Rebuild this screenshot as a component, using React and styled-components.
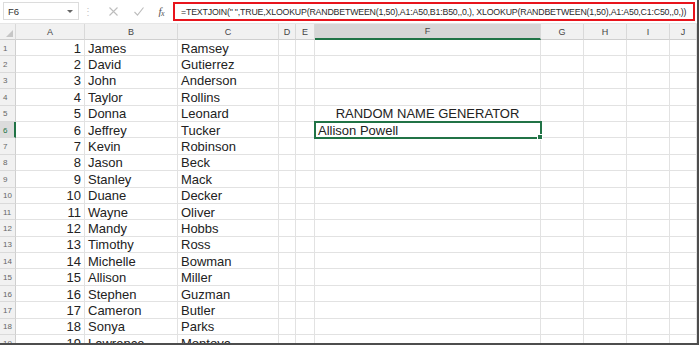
import React from "react";
import styled, { createGlobalStyle } from "styled-components";

const GlobalStyle = createGlobalStyle`
  html, body { margin: 0; padding: 0; background: #ffffff; }
  body { font-family: "Liberation Sans", Arial, sans-serif; }
`;

const COLS = [16, 69, 93, 101, 17, 19, 226, 43, 43, 43, 27];
const LETTERS = ["A", "B", "C", "D", "E", "F", "G", "H", "I", "J"];

const DATA = [
  ["James", "Ramsey"],
  ["David", "Gutierrez"],
  ["John", "Anderson"],
  ["Taylor", "Rollins"],
  ["Donna", "Leonard"],
  ["Jeffrey", "Tucker"],
  ["Kevin", "Robinson"],
  ["Jason", "Beck"],
  ["Stanley", "Mack"],
  ["Duane", "Decker"],
  ["Wayne", "Oliver"],
  ["Mandy", "Hobbs"],
  ["Timothy", "Ross"],
  ["Michelle", "Bowman"],
  ["Allison", "Miller"],
  ["Stephen", "Guzman"],
  ["Cameron", "Butler"],
  ["Sonya", "Parks"],
  ["Lawrence", "Montoya"],
];

const FORMULA =
  '=TEXTJOIN(" ",TRUE,XLOOKUP(RANDBETWEEN(1,50),A1:A50,B1:B50,,0,), XLOOKUP(RANDBETWEEN(1,50),A1:A50,C1:C50,,0,))';

const Frame = styled.div`
  width: 697px;
  height: 343px;
  border-right: 2px solid #4d4d4d;
  border-bottom: 2px solid #4d4d4d;
  overflow: hidden;
  display: flex;
  flex-direction: column;
  background: #ffffff;
`;

const FormulaBar = styled.div`
  flex-shrink: 0;
  height: 24px;
  box-sizing: border-box;
  display: flex;
  align-items: flex-start;
  padding: 2px 2px 0 3px;
  background: #ffffff;
  border-bottom: 1px solid #e6e6e6;
`;

const NameBox = styled.div`
  width: 76px;
  height: 18px;
  box-sizing: border-box;
  border: 1px solid #dcdcdc;
  display: flex;
  align-items: center;
  justify-content: space-between;
  padding: 0 5px 0 4px;
  font-size: 9.5px;
  color: #333;
`;

const Caret = styled.span`
  width: 0;
  height: 0;
  border-left: 3px solid transparent;
  border-right: 3px solid transparent;
  border-top: 3px solid #666;
`;

const Grip = styled.div`
  width: 18px;
  height: 18px;
  display: flex;
  align-items: center;
  justify-content: center;
  color: #c4c4c4;
  font-size: 10px;
`;

const Buttons = styled.div`
  width: 76px;
  height: 18px;
  display: flex;
  align-items: center;
  justify-content: space-around;
  padding: 0 2px 0 4px;
  box-sizing: border-box;
`;

const FxLabel = styled.span`
  font-family: "Liberation Serif", "Times New Roman", serif;
  font-style: italic;
  font-size: 11px;
  color: #555;
  letter-spacing: -0.5px;
  & > sub {
    font-size: 8px;
    vertical-align: -1px;
  }
`;

const FormulaBox = styled.div`
  flex: 1;
  height: 19px;
  box-sizing: border-box;
  border: 2px solid #e8141c;
  display: flex;
  align-items: center;
  padding-left: 6px;
  font-size: 8.8px;
  letter-spacing: -0.19px;
  color: #2b2b2b;
  white-space: nowrap;
  overflow: hidden;
`;

const Sheet = styled.div`
  display: grid;
  grid-template-columns: ${COLS.map((c) => c + "px").join(" ")};
  grid-template-rows: 16px;
  grid-auto-rows: 16.4px;
`;

const HeaderCell = styled.div`
  box-sizing: border-box;
  background: ${(p) => (p.$selected ? "#d6d6d6" : "#f1f1f1")};
  border-right: 1px solid #d9d9d9;
  border-bottom: ${(p) => (p.$selected ? "2px solid #217346" : "1px solid #cfcfcf")};
  display: flex;
  align-items: center;
  justify-content: center;
  font-size: 9px;
  color: #454545;
`;

const Corner = styled.div`
  box-sizing: border-box;
  background: #f1f1f1;
  border-right: 1px solid #d9d9d9;
  border-bottom: 1px solid #cfcfcf;
  display: flex;
  align-items: flex-end;
  justify-content: flex-end;
  padding: 0 2px 2px 0;
`;

const Triangle = styled.span`
  width: 0;
  height: 0;
  border-left: 7px solid transparent;
  border-bottom: 7px solid #c6c6c6;
`;

const RowHead = styled.div`
  box-sizing: border-box;
  background: ${(p) => (p.$selected ? "#dcdcdc" : "#f1f1f1")};
  border-right: ${(p) => (p.$selected ? "2px solid #217346" : "1px solid #cfcfcf")};
  border-bottom: 1px solid #dadada;
  display: flex;
  align-items: center;
  padding: 1px 0 0 3px;
  font-size: 8px;
  color: ${(p) => (p.$selected ? "#217346" : "#666")};
`;

const Cell = styled.div`
  position: relative;
  box-sizing: border-box;
  border-right: 1px solid #e2e2e2;
  border-bottom: 1px solid #e2e2e2;
  display: flex;
  align-items: center;
  justify-content: ${(p) =>
    p.$align === "right" ? "flex-end" : p.$align === "center" ? "center" : "flex-start"};
  padding: 1px 3px 0 3px;
  font-size: 13px;
  color: #222;
  white-space: nowrap;
  overflow: visible;
  ${(p) =>
    p.$selected &&
    `
    outline: 2px solid #217346;
    outline-offset: -1px;
    z-index: 1;
  `}
`;

const Handle = styled.span`
  position: absolute;
  right: -3px;
  bottom: -3px;
  width: 4px;
  height: 4px;
  background: #217346;
  border: 1px solid #fff;
`;

function Cross() {
  return (
    <svg width="11" height="11" viewBox="0 0 11 11">
      <path d="M1.5 1.5 L9.5 9.5 M9.5 1.5 L1.5 9.5" stroke="#bdbdbd" strokeWidth="1.1" fill="none" />
    </svg>
  );
}

function Check() {
  return (
    <svg width="12" height="11" viewBox="0 0 12 11">
      <path d="M1.5 6 L4.5 9.2 L10.5 1.5" stroke="#bdbdbd" strokeWidth="1.1" fill="none" />
    </svg>
  );
}

function renderRow(r) {
  const idx = r + 1;
  const [first, last] = DATA[r];
  const sel = idx === 6;
  const cells = [];
  cells.push(
    <RowHead key="h" $selected={sel}>
      {idx}
    </RowHead>
  );
  cells.push(
    <Cell key="a" $align="right">
      {idx}
    </Cell>
  );
  cells.push(<Cell key="b">{first}</Cell>);
  cells.push(<Cell key="c">{last}</Cell>);
  cells.push(<Cell key="d" />);
  cells.push(<Cell key="e" />);
  if (idx === 5) {
    cells.push(
      <Cell key="f" $align="center">
        RANDOM NAME GENERATOR
      </Cell>
    );
  } else if (idx === 6) {
    cells.push(
      <Cell key="f" $selected>
        Allison Powell
        <Handle />
      </Cell>
    );
  } else {
    cells.push(<Cell key="f" />);
  }
  cells.push(<Cell key="g" />);
  cells.push(<Cell key="h2" />);
  cells.push(<Cell key="i" />);
  cells.push(<Cell key="j" />);
  return <React.Fragment key={idx}>{cells}</React.Fragment>;
}

export default function App() {
  return (
    <>
      <GlobalStyle />
      <Frame>
        <FormulaBar>
          <NameBox>
            <span>F6</span>
            <Caret />
          </NameBox>
          <Grip>⋮</Grip>
          <Buttons>
            <Cross />
            <Check />
            <FxLabel>
              f<sub>x</sub>
            </FxLabel>
          </Buttons>
          <FormulaBox>{FORMULA}</FormulaBox>
        </FormulaBar>
        <Sheet>
          <Corner>
            <Triangle />
          </Corner>
          {LETTERS.map((l) => (
            <HeaderCell key={l} $selected={l === "F"}>
              {l}
            </HeaderCell>
          ))}
          {DATA.map((_, r) => renderRow(r))}
        </Sheet>
      </Frame>
    </>
  );
}
